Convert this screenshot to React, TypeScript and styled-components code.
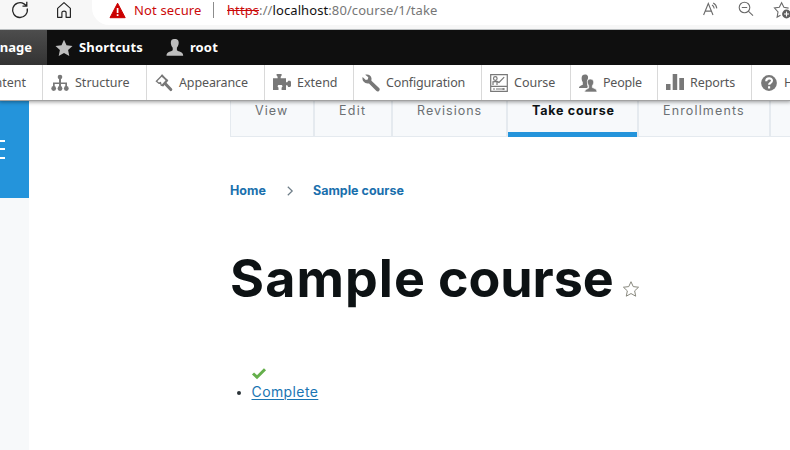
import React from 'react';
import styled, { createGlobalStyle } from 'styled-components';

const Global = createGlobalStyle`
  * { box-sizing: border-box; }
  body { margin: 0; background: #fff; overflow: hidden; }
`;

const Page = styled.div`
  width: 790px;
  height: 450px;
  overflow: hidden;
  display: flex;
  flex-direction: column;
  background: #fff;
  font-family: 'Noto Sans', sans-serif;
`;

const Svg = styled.svg`
  display: block;
  flex: none;
  overflow: visible;
`;

/* Browser chrome */
const BrowserBar = styled.header`
  flex: none;
  height: 30px;
  display: flex;
  align-items: flex-start;
  background: #f7f7f7;
  border-bottom: 1px solid #b9bdbf;
`;
const BrowserButtons = styled.div`
  width: 92px;
  padding: 1px 0 0 11px;
  display: flex;
  gap: 26px;
`;
const AddressBar = styled.div`
  flex: 1;
  height: 25px;
  padding: 0 0 5px 17px;
  display: flex;
  align-items: center;
  background: #fff;
  border-bottom-left-radius: 17px;
  font-size: 13px;
  line-height: 20px;
  white-space: pre;
`;
const Warning = styled.span`
  width: 67px;
  margin: -1px 0 0 8px;
  color: #cb0909;
  letter-spacing: 0.15px;
`;
const Separator = styled.i`
  width: 1px;
  height: 16px;
  margin: 0 13px 0 12px;
  background: #8c8c8c;
`;
const Url = styled.span`
  flex: 1;
  margin-top: -1px;
  color: #767676;
  letter-spacing: 0.09px;
`;
const Scheme = styled.span`
  color: #cb0909;
  text-decoration: line-through;
`;
const Host = styled.span`
  color: #111;
`;
const AddressActions = styled.div`
  display: flex;
  width: 87px;
  gap: 19px;
`;

/* Admin toolbar */
const AdminBar = styled.nav`
  flex: none;
  height: 35px;
  display: flex;
  background: #0f0f0f;
  color: #fff;
  font-size: 13px;
  font-weight: 700;
`;
const AdminLabel = styled.span`
  margin-top: -2px;
`;
const ManageTab = styled.div`
  width: 47px;
  padding-right: 15px;
  display: flex;
  align-items: center;
  justify-content: flex-end;
  background: linear-gradient(#4d4d4d, #333);
`;
const AdminLink = styled.div<{ $indent: number; $track: number }>`
  display: flex;
  align-items: center;
  gap: 6px;
  padding-left: ${(p) => p.$indent}px;
  letter-spacing: ${(p) => p.$track}px;
`;
const Tray = styled.nav`
  flex: none;
  position: relative;
  z-index: 1;
  height: 36px;
  display: flex;
  background: #fff;
  border-bottom: 1px solid #a2a2a2;
  box-shadow: 0 0 4px 1px rgba(0, 0, 0, 0.4);
  clip-path: inset(0 0 -8px 0);
`;
const TrayItem = styled.div<{ $width: number; $end?: boolean; $track?: number }>`
  flex: none;
  width: ${(p) => p.$width}px;
  padding: ${(p) => (p.$end ? '0 16px 0 0' : '0 0 0 8px')};
  display: flex;
  align-items: center;
  justify-content: ${(p) => (p.$end ? 'flex-end' : 'flex-start')};
  gap: 6px;
  border-right: 1px solid #d9d9d9;
  color: #565656;
  font-size: 12.5px;
  white-space: nowrap;
  letter-spacing: ${(p) => p.$track ?? 0}px;
`;

/* Site */
const Site = styled.div`
  flex: 1;
  display: flex;
  min-height: 0;
`;
const SideRail = styled.aside`
  width: 29px;
  background: #f7f9fa;
`;
const MenuBlock = styled.div`
  height: 97px;
  padding-top: 39px;
  background: #2494db;
`;
const Main = styled.main`
  flex: 1;
  min-width: 0;
  padding-left: 201px;
  font-family: Inter, sans-serif;
`;
const Tabs = styled.div`
  height: 36px;
  display: flex;
`;
const Tab = styled.div<{ $width: number; $track: number; $active?: boolean }>`
  position: relative;
  flex: none;
  width: ${(p) => p.$width}px;
  padding: 1px 0 0 24px;
  background: #f7f9fb;
  border: 1px solid #e5eaef;
  border-top: 0;
  color: ${(p) => (p.$active ? '#0d1214' : '#6c7073')};
  font-size: 12.5px;
  font-weight: ${(p) => (p.$active ? 650 : 400)};
  line-height: 18px;
  letter-spacing: ${(p) => p.$track}px;
  white-space: nowrap;
  &::after {
    content: '';
    display: ${(p) => (p.$active ? 'block' : 'none')};
    position: absolute;
    inset: auto 0 -1px;
    height: 5px;
    background: #2494db;
  }
`;
const Breadcrumb = styled.div`
  height: 20px;
  margin-top: 43px;
  display: flex;
  align-items: center;
  color: #1a70ad;
  font-size: 12.5px;
  font-weight: 700;
`;
const Crumb = styled.span<{ $width: number }>`
  width: ${(p) => p.$width}px;
  white-space: nowrap;
`;
const Chevron = styled(Svg)`
  margin: 2px 20px 0 21px;
`;
const Title = styled.h1`
  height: 60px;
  margin: 49px 0 0;
  display: flex;
  align-items: center;
  color: #0d1214;
  font-size: 52px;
  font-weight: 700;
  line-height: 60px;
`;
const Word = styled.span<{ $width: number; $track: number }>`
  width: ${(p) => p.$width}px;
  letter-spacing: ${(p) => p.$track}px;
`;
const Favorite = styled(Svg)`
  margin: 20px 0 0 10px;
`;
const Outline = styled.ul`
  margin: 59px 0 0;
  padding: 0 0 0 7px;
  list-style: none;
`;
const OutlineItem = styled.li`
  display: grid;
  grid-template-columns: 14.5px auto;
  justify-content: start;
  align-items: center;
`;
const Check = styled(Svg)`
  grid-column: 2;
`;
const Bullet = styled.i`
  width: 4px;
  height: 4px;
  margin-top: 3px;
  border-radius: 50%;
  background: #2b3338;
`;
const CourseLink = styled.a`
  margin: 1px 0 -1px;
  color: #1a75b3;
  font-size: 14px;
  line-height: 24px;
  letter-spacing: 0.4px;
  text-decoration: underline;
  text-decoration-thickness: 1px;
  text-underline-offset: 2px;
`;

const STAR = 'M9 .8l2.5 5.5 6 .7-4.4 4.1 1.2 6-5.3-3-5.3 3 1.2-6L.5 7l6-.7z';
const G = '#787878';

const Structure = () => (
  <Svg width="18" height="18" fill={G}>
    <circle cx="9" cy="3" r="2.3" />
    <path d="M8 3h2v10H8zM2 8.5h14v5h-1.7V10H3.7v3.5H2z" />
    <circle cx="2.7" cy="14.5" r="2.4" />
    <circle cx="9" cy="14.5" r="2.4" />
    <circle cx="15.3" cy="14.5" r="2.4" />
  </Svg>
);
const Appearance = () => (
  <Svg width="18" height="18" fill="none" stroke={G}>
    <path d="M7.3 1.2L1.4 7.2l2.5 2 1.6-.6.7 2.6 1.8.6 4-4.8z" strokeWidth="1.3" />
    <path d="M6.6.5l6.8 5.8L8.2 12 6.4 11l4.3-4.8L5.7 2z" fill={G} stroke="none" />
    <path d="M10.8 10.2l5 5.4" strokeWidth="3" strokeLinecap="round" />
  </Svg>
);
const Extend = () => (
  <Svg width="18" height="18" fill={G}>
    <path d="M3.6 0h5v1.5L7.7 2.7V4.3H13v4h1.3l.9-1.6h1.9l.9 1v4.2l-.9 1h-1.9l-.9-1.6H13V16H8.6v-2.3l1-1.5-.8-1.3H5.3l-.8 1.3 1 1.5V16H0V4.3h4.6V2.7l-1-1.2z" />
  </Svg>
);
const Wrench = () => (
  <Svg width="18" height="18" fill={G}>
    <path d="M.6 3.1l3.2 2.8 2-.5.5-2.1L3.2.7c2.8-.9 6 .4 6.3 3.6l-.1 2.4 7.7 7.2c1.9 2-.9 4.8-2.9 2.9L7 9.4C3.2 10.2-.4 7.2.6 3.1z" />
  </Svg>
);
const CourseIcon = () => (
  <Svg width="18" height="18" fill="none" stroke={G} strokeWidth="1.2">
    <path d="M.7.7h16.6v16.6H.7zM1 12.3h16M3 15h2M6 15h9M13.2 14v2" />
    <circle cx="5.3" cy="4.5" r="1.8" />
    <path d="M3 11V7.8l4-.4 2 1 5.2-5.2M7 8v3" />
  </Svg>
);
const People = () => (
  <Svg width="18" height="18" fill={G}>
    <path d="M3.3 1.5C5 0 8.5 0 9 2.6c.3 2-.4 3-1 4C8 9 8.2 12 8.8 13L8 14H0c0-2.2 2.4-2.2 3.8-3.2V8.3C2.5 6.6 2.2 3.2 3.3 1.5z" />
    <path d="M8.8 6.2c1.5-1.8 5-1.4 5.7 1 .4 2.2-.5 3.6-1.2 4.6v1.8c1.6.9 4.7 1.2 4.7 4.4H5.7c0-2.7 2.7-2.7 4-4v-2.5c-1.1-1.5-2-3.7-.9-5.3z" stroke="#fff" strokeWidth=".6" />
  </Svg>
);
const Reports = () => (
  <Svg width="18" height="18" fill={G}>
    <path d="M0 10h4.5v6H0zM6.7 0h4.5v16H6.7zM13.3 4H18v12h-4.7z" />
  </Svg>
);
const Help = () => (
  <Svg width="18" height="18" fill="none">
    <circle cx="9" cy="9" r="7.9" fill={G} />
    <path d="M6.2 7.2c0-3.8 5.8-3.6 5.8-.5 0 2.1-2.9 2.1-2.9 4.1M9.1 12.3v2.3" stroke="#fff" strokeWidth="2.1" />
  </Svg>
);

const TRAY = [
  { label: 'Structure', width: 104, track: 0, Icon: Structure },
  { label: 'Appearance', width: 118, track: -0.12, Icon: Appearance },
  { label: 'Extend', width: 89, track: 0, Icon: Extend },
  { label: 'Configuration', width: 128, track: -0.15, Icon: Wrench },
  { label: 'Course', width: 89, track: 0, Icon: CourseIcon },
  { label: 'People', width: 87, track: -0.2, Icon: People },
  { label: 'Reports', width: 94, track: -0.1, Icon: Reports },
  { label: 'Help', width: 80, track: 0, Icon: Help },
];

const TABS = [
  { label: 'View', width: 84, track: 1.1 },
  { label: 'Edit', width: 78, track: 1.3 },
  { label: 'Revisions', width: 115, track: 1.02 },
  { label: 'Take course', width: 131, track: 0.75, active: true },
  { label: 'Enrollments', width: 132, track: 1.15 },
  { label: '', width: 60, track: 1 },
];

export default function App() {
  return (
    <Page>
      <Global />
      <BrowserBar>
        <BrowserButtons>
          <Svg width="18" height="18" fill="none" stroke="#262626" strokeWidth="1.3">
            <path d="M16.2 7.5A7.4 7.4 0 1 1 13 2.9l2.6 1.9M15.8.8v4.3h-4.3" />
          </Svg>
          <Svg width="18" height="18" fill="none" stroke="#262626" strokeWidth="1.2">
            <path d="M2.6 7.4L9 1.6l6.4 5.8v8.9h-4.3v-4.5c0-2.1-4.2-2.1-4.2 0v4.5H2.6z" strokeLinejoin="round" />
          </Svg>
        </BrowserButtons>
        <AddressBar>
          <Svg width="17" height="17" fill="#cb0000">
            <path d="M8.6 1.2l7.6 14.5H1z" stroke="#cb0000" strokeLinejoin="round" />
            <path d="M8.6 6v5M8.6 12.3v1.8" stroke="#fff" strokeWidth="1.7" />
          </Svg>
          <Warning>Not secure</Warning>
          <Separator />
          <Url>
            <Scheme>https</Scheme>://<Host>localhost</Host>:80/course/1/take
          </Url>
          <AddressActions>
            <Svg width="17" height="16" fill="none" stroke="#6b6b6b" strokeWidth="1.1">
              <path d="M.6 14L5.3 2.5 10 14M2.2 10.1h6.2M9 4.1q2 1 2.2 3.4M10.2 1.9q3.2 1.6 3.6 5.5" />
            </Svg>
            <Svg width="16" height="16" fill="none" stroke="#6b6b6b" strokeWidth="1.1">
              <circle cx="5.5" cy="6.5" r="5.3" />
              <path d="M2.8 6.5h5.4M9.3 10.2l4.7 4.5" />
            </Svg>
            <Svg width="18" height="18" fill="none" stroke="#6b6b6b" strokeWidth="1.1">
              <path d="M6.5 14.2l-3.4 1.9.9-5.3L.5 7l4.8-.7L7.6 1.8 9.9 6.3l4.7.8" />
              <circle cx="12.5" cy="13" r="4.4" fill="#5f5f5f" stroke="none" />
              <path d="M10 13h5M12.5 10.5v5" stroke="#fff" />
            </Svg>
          </AddressActions>
        </AddressBar>
      </BrowserBar>

      <AdminBar>
        <ManageTab><AdminLabel>Manage</AdminLabel></ManageTab>
        <AdminLink $indent={8} $track={0.15}>
          <Svg width="18" height="18" fill="#bebebe"><path d={STAR} /></Svg>
          <AdminLabel>Shortcuts</AdminLabel>
        </AdminLink>
        <AdminLink $indent={23} $track={0.15}>
          <Svg width="18" height="18" fill="#bebebe">
            <path d="M5.5 1.1c1.7-1.5 5.3-1.5 6.6.2 1.3 2 .5 5.6-1.2 7.5v2.4c1.6 1.7 6.3 1.1 6.3 5.5H.5c0-4.5 4.6-3.8 6.2-5.5V8.8C4.8 6.9 4.2 3 5.5 1.1z" />
          </Svg>
          <AdminLabel>root</AdminLabel>
        </AdminLink>
      </AdminBar>

      <Tray>
        <TrayItem $width={43} $end>Content</TrayItem>
        {TRAY.map(({ label, width, track, Icon }) => (
          <TrayItem key={label} $width={width} $track={track}>
            <Icon />
            {label}
          </TrayItem>
        ))}
      </Tray>

      <Site>
        <SideRail>
          <MenuBlock>
            <Svg width="5" height="19" fill="#fff">
              <path d="M0 0h5v2H0zM0 8h5v2H0zM0 17h5v2H0z" />
            </Svg>
          </MenuBlock>
        </SideRail>
        <Main>
          <Tabs>
            {TABS.map((t) => (
              <Tab key={t.label} $width={t.width} $track={t.track} $active={t.active}>
                {t.label}
              </Tab>
            ))}
          </Tabs>
          <Breadcrumb>
            <Crumb $width={36}>Home</Crumb>
            <Chevron width="6" height="10" fill="none" stroke="#6e7d88" strokeWidth="1.2">
              <path d="M.8.7L5.2 5 .8 9.3" />
            </Chevron>
            <Crumb $width={100}>Sample course</Crumb>
          </Breadcrumb>
          <Title>
            <Word $width={208} $track={1.1}>Sample</Word>
            <Word $width={175} $track={-0.1}>course</Word>
            <Favorite width="16" height="16" viewBox="0 0 18 18" fill="none" stroke="#85857b" strokeWidth="1.1">
              <path d={STAR} />
            </Favorite>
          </Title>
          <Outline>
            <OutlineItem>
              <Check width="14" height="11" fill="none" stroke="#65af4b" strokeWidth="3">
                <path d="M1 5.5l4 3.7L13 1.3" />
              </Check>
              <Bullet />
              <CourseLink>Complete</CourseLink>
            </OutlineItem>
          </Outline>
        </Main>
      </Site>
    </Page>
  );
}
